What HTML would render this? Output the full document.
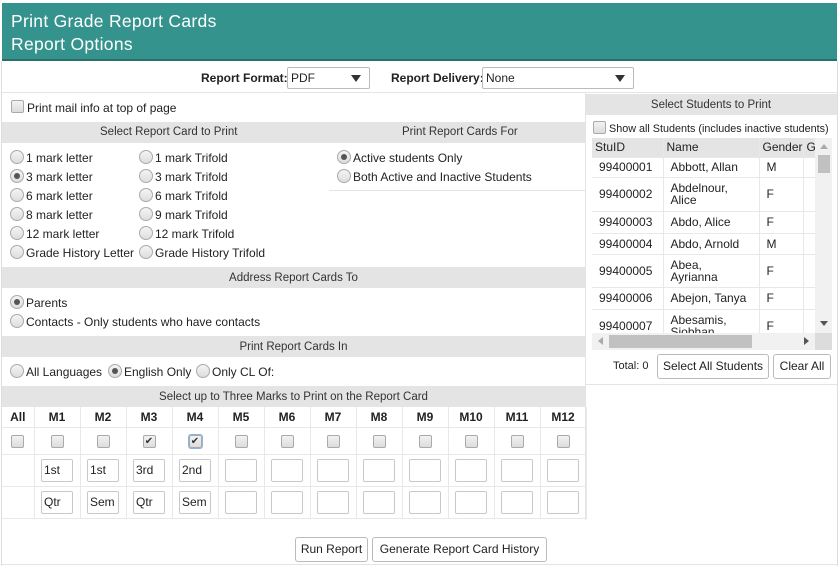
<!DOCTYPE html>
<html><head><meta charset="utf-8"><style>
*{box-sizing:border-box;margin:0;padding:0}
body{width:839px;height:566px;background:#fff;font-family:"Liberation Sans",sans-serif;font-size:12px;color:#222;position:relative;overflow:hidden}
.a{position:absolute;white-space:nowrap}
.hdr{left:2px;top:3px;width:835px;height:58px;background:#35938d;border-bottom:2px solid #2a6e6a;color:#fff;font-size:17.5px;padding:7px 0 0 9px;line-height:23px;letter-spacing:.3px}
.band{background:#e4e4e4;height:21px;line-height:22px;text-align:center;font-size:11.5px;color:#333}
.sel{border:1px solid #bbb;border-radius:2px;height:22px;line-height:20px;padding-left:3px;background:#fff}
.sel:after{content:"";position:absolute;right:8px;top:7px;border-left:5px solid transparent;border-right:5px solid transparent;border-top:7px solid #333}
.r{width:14px;height:14px;border-radius:50%;border:1px solid #aaa;background:linear-gradient(#f4f4f4,#ddd)}
.r.on:after{content:"";position:absolute;left:3px;top:3px;width:6px;height:6px;border-radius:50%;background:#555}
.cb{width:13px;height:13px;border:1px solid #aaa;border-radius:2px;background:linear-gradient(#f2f2f2,#dcdcdc)}
.t{line-height:14px}
.btn{border:1px solid #bbb;border-radius:3px;background:#fff;height:25px;line-height:23px;text-align:center;font-size:12px}
.hl{height:1px;background:#e4e4e4}
table.m{position:absolute;left:2px;top:407px;border-collapse:collapse;table-layout:fixed}
table.m td{border-right:1px solid #e8e8e8;border-bottom:1px solid #e8e8e8;text-align:center;padding:0;vertical-align:middle}
table.m tr.h td{height:20px;font-weight:bold;font-size:12px}
table.m tr.c td{height:27px}
table.m tr.i td{height:32px}
.cbi{display:inline-block;width:13px;height:13px;border:1px solid #aaa;border-radius:2px;background:linear-gradient(#f2f2f2,#dcdcdc);vertical-align:middle;font-size:10px;line-height:11px;color:#333}
.inp{display:inline-block;width:32px;height:23px;border:1px solid #c8c8c8;border-radius:2px;text-align:left;padding-left:2px;line-height:21px;font-size:12px;vertical-align:middle}
table.s{position:absolute;left:592px;top:138px;border-collapse:collapse;table-layout:fixed;font-size:12px}
table.s td{border-right:1px solid #e8e8e8;border-bottom:1px solid #e8e8e8;padding:0 0 0 7px;line-height:12px}
table.s tr.h td{background:#e4e4e4;height:19px;padding-left:3px}
</style></head><body>
<div class="a hdr">Print Grade Report Cards<br>Report Options</div>

<div class="a" style="left:201px;top:71px;font-weight:bold">Report Format:</div>
<div class="a sel" style="left:287px;top:67px;width:83px">PDF</div>
<div class="a" style="left:391px;top:71px;font-weight:bold">Report Delivery:</div>
<div class="a sel" style="left:482px;top:67px;width:152px">None</div>
<div class="a hl" style="left:2px;top:92px;width:835px"></div>

<div class="a cb" style="left:11px;top:100px"></div>
<div class="a t" style="left:27px;top:101px">Print mail info at top of page</div>

<div class="a band" style="left:2px;top:122px;width:583px"></div>
<div class="a" style="left:100px;top:126px;font-size:11.5px;color:#333">Select Report Card to Print</div>
<div class="a" style="left:402px;top:126px;font-size:11.5px;color:#333">Print Report Cards For</div>

<div class="a r" style="left:10px;top:150px"></div><div class="a t" style="left:26px;top:151px">1 mark letter</div>
<div class="a r on" style="left:10px;top:169px"></div><div class="a t" style="left:26px;top:170px">3 mark letter</div>
<div class="a r" style="left:10px;top:188px"></div><div class="a t" style="left:26px;top:189px">6 mark letter</div>
<div class="a r" style="left:10px;top:207px"></div><div class="a t" style="left:26px;top:208px">8 mark letter</div>
<div class="a r" style="left:10px;top:226px"></div><div class="a t" style="left:26px;top:227px">12 mark letter</div>
<div class="a r" style="left:10px;top:245px"></div><div class="a t" style="left:26px;top:246px">Grade History Letter</div>
<div class="a r" style="left:139px;top:150px"></div><div class="a t" style="left:155px;top:151px">1 mark Trifold</div>
<div class="a r" style="left:139px;top:169px"></div><div class="a t" style="left:155px;top:170px">3 mark Trifold</div>
<div class="a r" style="left:139px;top:188px"></div><div class="a t" style="left:155px;top:189px">6 mark Trifold</div>
<div class="a r" style="left:139px;top:207px"></div><div class="a t" style="left:155px;top:208px">9 mark Trifold</div>
<div class="a r" style="left:139px;top:226px"></div><div class="a t" style="left:155px;top:227px">12 mark Trifold</div>
<div class="a r" style="left:139px;top:245px"></div><div class="a t" style="left:155px;top:246px">Grade History Trifold</div>
<div class="a r on" style="left:337px;top:150px"></div><div class="a t" style="left:353px;top:151px">Active students Only</div>
<div class="a r" style="left:337px;top:169px"></div><div class="a t" style="left:353px;top:170px">Both Active and Inactive Students</div>
<div class="a hl" style="left:329px;top:190px;width:256px"></div>

<div class="a band" style="left:2px;top:267px;width:583px">Address Report Cards To</div>
<div class="a r on" style="left:10px;top:295px"></div><div class="a t" style="left:26px;top:296px">Parents</div>
<div class="a r" style="left:10px;top:314px"></div><div class="a t" style="left:26px;top:315px">Contacts - Only students who have contacts</div>

<div class="a band" style="left:2px;top:336px;width:583px">Print Report Cards In</div>
<div class="a r" style="left:10px;top:364px"></div><div class="a t" style="left:26px;top:365px">All Languages</div>
<div class="a r on" style="left:108px;top:364px"></div><div class="a t" style="left:124px;top:365px">English Only</div>
<div class="a r" style="left:196px;top:364px"></div><div class="a t" style="left:212px;top:365px">Only CL Of:</div>

<div class="a band" style="left:2px;top:386px;width:583px">Select up to Three Marks to Print on the Report Card</div>

<table class="m">
<colgroup><col style="width:32px"><col span="12" style="width:46px"></colgroup>
<tr class="h"><td>All</td><td>M1</td><td>M2</td><td>M3</td><td>M4</td><td>M5</td><td>M6</td><td>M7</td><td>M8</td><td>M9</td><td>M10</td><td>M11</td><td>M12</td></tr>
<tr class="c"><td><span class="cbi"></span></td><td><span class="cbi"></span></td><td><span class="cbi"></span></td><td><span class="cbi">✔</span></td><td><span class="cbi" style="box-shadow:0 0 0 1px #8ab4e8">✔</span></td><td><span class="cbi"></span></td><td><span class="cbi"></span></td><td><span class="cbi"></span></td><td><span class="cbi"></span></td><td><span class="cbi"></span></td><td><span class="cbi"></span></td><td><span class="cbi"></span></td><td><span class="cbi"></span></td></tr>
<tr class="i"><td></td><td><span class="inp">1st</span></td><td><span class="inp">1st</span></td><td><span class="inp">3rd</span></td><td><span class="inp">2nd</span></td><td><span class="inp"></span></td><td><span class="inp"></span></td><td><span class="inp"></span></td><td><span class="inp"></span></td><td><span class="inp"></span></td><td><span class="inp"></span></td><td><span class="inp"></span></td><td><span class="inp"></span></td></tr>
<tr class="i"><td></td><td><span class="inp">Qtr</span></td><td><span class="inp">Sem</span></td><td><span class="inp">Qtr</span></td><td><span class="inp">Sem</span></td><td><span class="inp"></span></td><td><span class="inp"></span></td><td><span class="inp"></span></td><td><span class="inp"></span></td><td><span class="inp"></span></td><td><span class="inp"></span></td><td><span class="inp"></span></td><td><span class="inp"></span></td></tr>
</table>

<div class="a btn" style="left:295px;top:537px;width:73px">Run Report</div>
<div class="a btn" style="left:372px;top:537px;width:175px">Generate Report Card History</div>
<div class="a hl" style="left:2px;top:564px;width:835px"></div>

<!-- right -->
<div class="a band" style="left:585px;top:94px;width:252px">Select Students to Print</div>
<div class="a cb" style="left:593px;top:121px"></div>
<div class="a t" style="left:609px;top:122px;font-size:10.8px">Show all Students (includes inactive students)</div>
<div class="a" style="left:592px;top:138px;width:240px;height:212px;overflow:hidden">
<table class="s" style="left:0;top:0">
<colgroup><col style="width:71px"><col style="width:96px"><col style="width:44px"><col style="width:20px"></colgroup>
<tr class="h"><td>StuID</td><td>Name</td><td>Gender</td><td>G</td></tr>
<tr><td style="height:20px">99400001</td><td>Abbott, Allan</td><td>M</td><td></td></tr>
<tr><td style="height:34px">99400002</td><td>Abdelnour,<br>Alice</td><td>F</td><td></td></tr>
<tr><td style="height:22px">99400003</td><td>Abdo, Alice</td><td>F</td><td></td></tr>
<tr><td style="height:21px">99400004</td><td>Abdo, Arnold</td><td>M</td><td></td></tr>
<tr><td style="height:33px">99400005</td><td>Abea,<br>Ayrianna</td><td>F</td><td></td></tr>
<tr><td style="height:22px">99400006</td><td>Abejon, Tanya</td><td>F</td><td></td></tr>
<tr><td style="height:34px">99400007</td><td>Abesamis,<br>Siobhan</td><td>F</td><td></td></tr>
</table>
<div class="a" style="left:223px;top:0;width:17px;height:195px;background:#f1f1f1"></div>
<div class="a" style="left:226px;top:17px;width:12px;height:18px;background:#c1c1c1"></div>
<div class="a" style="left:228px;top:6px;border-left:4px solid transparent;border-right:4px solid transparent;border-bottom:5px solid #aaa"></div>
<div class="a" style="left:228px;top:183px;border-left:4px solid transparent;border-right:4px solid transparent;border-top:5px solid #555"></div>
<div class="a" style="left:0;top:195px;width:240px;height:17px;background:#f1f1f1"></div>
<div class="a" style="left:17px;top:197px;width:143px;height:13px;background:#c1c1c1"></div>
<div class="a" style="left:6px;top:199px;border-top:4px solid transparent;border-bottom:4px solid transparent;border-right:5px solid #aaa"></div>
<div class="a" style="left:212px;top:199px;border-top:4px solid transparent;border-bottom:4px solid transparent;border-left:5px solid #555"></div>
<div class="a" style="left:223px;top:195px;width:17px;height:17px;background:#dcdcdc"></div>
</div>
<div class="a" style="left:613px;top:360px;font-size:11px">Total: 0</div>
<div class="a btn" style="left:657px;top:354px;width:112px">Select All Students</div>
<div class="a btn" style="left:773px;top:354px;width:58px">Clear All</div>
<div class="a hl" style="left:585px;top:384px;width:252px"></div>
<div class="a" style="left:585px;top:92px;width:1px;height:428px;background:#e4e4e4"></div>
<div class="a" style="left:1px;top:61px;width:1px;height:505px;background:#ddd"></div>
<div class="a" style="left:837px;top:61px;width:1px;height:505px;background:#ddd"></div>
</body></html>
